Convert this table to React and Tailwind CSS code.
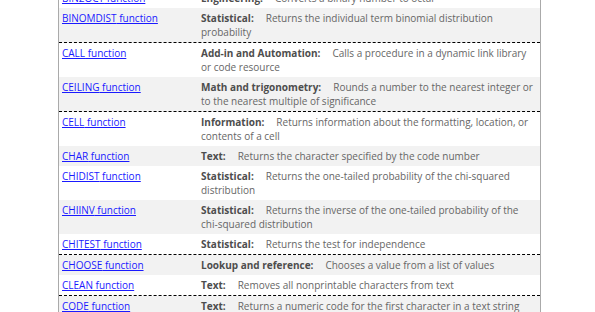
const rows = [
  { name: 'BIN2OCT', cat: 'Engineering:', desc: 'Converts a binary number to octal' },
  { name: 'BINOMDIST', cat: 'Statistical:', desc: 'Returns the individual term binomial distribution probability', dashed: true },
  { name: 'CALL', cat: 'Add-in and Automation:', desc: 'Calls a procedure in a dynamic link library or code resource' },
  { name: 'CEILING', cat: 'Math and trigonometry:', desc: 'Rounds a number to the nearest integer or to the nearest multiple of significance', dashed: true },
  { name: 'CELL', cat: 'Information:', desc: 'Returns information about the formatting, location, or contents of a cell' },
  { name: 'CHAR', cat: 'Text:', desc: 'Returns the character specified by the code number' },
  { name: 'CHIDIST', cat: 'Statistical:', desc: 'Returns the one-tailed probability of the chi-squared distribution' },
  { name: 'CHIINV', cat: 'Statistical:', desc: 'Returns the inverse of the one-tailed probability of the chi-squared distribution' },
  { name: 'CHITEST', cat: 'Statistical:', desc: 'Returns the test for independence', dashed: true },
  { name: 'CHOOSE', cat: 'Lookup and reference:', desc: 'Chooses a value from a list of values' },
  { name: 'CLEAN', cat: 'Text:', desc: 'Removes all nonprintable characters from text', dashed: true },
  { name: 'CODE', cat: 'Text:', desc: 'Returns a numeric code for the first character in a text string' },
];

export default function App() {
  return (
    <div className="h-[312px] w-[595px] overflow-hidden bg-white font-['Open_Sans',sans-serif] text-[10px] leading-[14px]">
      <div className="ml-[58px] mt-[-12px] w-[483px] border-x border-[#aaaaaa]">
        {rows.map((r, i) => (
          <div
            key={r.name}
            className={`flex py-[3px] ${i % 2 ? 'bg-[#f2f2f2]' : 'bg-white'} ${r.dashed ? 'border-b border-dashed border-black' : ''}`}
          >
            <div className="w-[142px] shrink-0 pl-[3px]">
              <a href="#" className="text-[#1a1aff] underline">{r.name} function</a>
            </div>
            <div className="flex-1 pr-[3px] text-[#666666]">
              <span className="mr-[12px] font-bold text-[#4d4d4d]">{r.cat}</span>
              {r.desc}
            </div>
          </div>
        ))}
      </div>
    </div>
  );
}
